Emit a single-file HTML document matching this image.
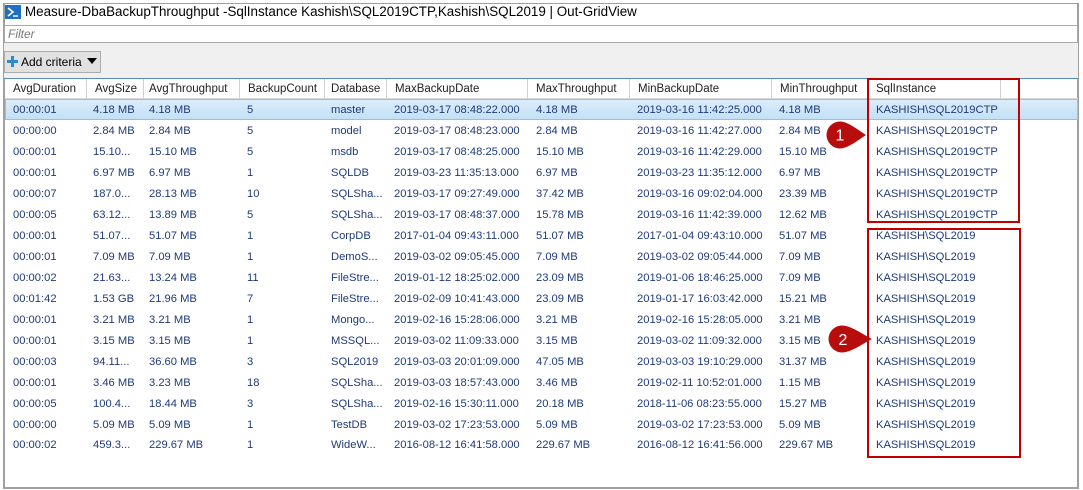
<!DOCTYPE html>
<html><head><meta charset="utf-8"><style>
*{margin:0;padding:0;box-sizing:border-box}
body{width:1083px;height:490px;background:#fff;position:relative;overflow:hidden;font-family:"Liberation Sans",sans-serif;font-size:11px}
.a{position:absolute;white-space:nowrap}
#frame{position:absolute;left:3px;top:3px;width:1076px;height:486px;border:2px solid #a0a0a0;border-top:1px solid #a0a0a0}
.row{position:absolute;left:5px;width:1073px;height:21px;color:#1f3a78;font-size:11.2px}
.row span{position:absolute;top:5px;white-space:nowrap}
.c1{left:8px}.c2{left:88px}.c3{left:144px}.c4{left:242px}.c5{left:326px}.c6{left:389px}.c7{left:531px}.c8{left:632px}.c9{left:774px}.c10{left:871px}
.hd{position:absolute;top:79px;height:20px;border-right:1px solid #d0d0d0;color:#222;padding:4px 0 0 8px;border-bottom:1px solid #d8d8d8;font-size:11.5px}
</style></head><body>
<div id="frame"></div>
<svg class="a" style="left:5px;top:5px" width="16" height="14"><rect width="16" height="14" fill="#1f6fc4"/><path d="M3 3 L8 7 L3 11" stroke="#fff" stroke-width="1.6" fill="none"/><path d="M8 11 H13" stroke="#fff" stroke-width="1.4"/></svg>
<div class="a" style="left:25px;top:4px;font-size:13.4px;color:#000">Measure-DbaBackupThroughput -SqlInstance Kashish\SQL2019CTP,Kashish\SQL2019 | Out-GridView</div>
<div class="a" style="left:4px;top:25px;width:1074px;height:18px;border:1px solid #a8a8a8;background:#fff"></div>
<div class="a" style="left:8px;top:27px;font-style:italic;color:#777;font-size:12px">Filter</div>
<div class="a" style="left:4px;top:43px;width:1074px;height:36px;background:#f0f0f0"></div>
<div class="a" style="left:4px;top:51px;width:97px;height:22px;border:1px solid #adadad;background:#e1e1e1"></div>
<svg class="a" style="left:7px;top:56px" width="11" height="11"><path d="M5.5 0V11M0 5.5H11" stroke="#2b8ad8" stroke-width="3"/></svg>
<div class="a" style="left:21px;top:55px;color:#000;font-size:12px">Add criteria</div>
<svg class="a" style="left:87px;top:58px" width="10" height="7"><path d="M0 0H10L5 6Z" fill="#000"/></svg>
<div class="a" style="left:4px;top:78px;width:1074px;height:1px;background:#5a8ab8"></div>
<div class="hd" style="left:5px;width:82px">AvgDuration</div>
<div class="hd" style="left:87px;width:57px">AvgSize</div>
<div class="hd" style="left:144px;width:96px;padding-left:5px">AvgThroughput</div>
<div class="hd" style="left:240px;width:85px">BackupCount</div>
<div class="hd" style="left:325px;width:62px;padding-left:6px">Database</div>
<div class="hd" style="left:387px;width:141px">MaxBackupDate</div>
<div class="hd" style="left:528px;width:102px">MaxThroughput</div>
<div class="hd" style="left:630px;width:142px">MinBackupDate</div>
<div class="hd" style="left:772px;width:96px">MinThroughput</div>
<div class="hd" style="left:868px;width:133px">SqlInstance</div>
<div class="hd" style="left:1001px;width:77px;border-right:none"></div>
<div class="a" style="left:5px;top:99px;width:1073px;height:21px;background:linear-gradient(#dcedfb,#c3e0f6);border:1px solid #8fc3ea"></div>
<div class="row" style="top:99px"><span class="c1">00:00:01</span><span class="c2">4.18 MB</span><span class="c3">4.18 MB</span><span class="c4">5</span><span class="c5">master</span><span class="c6">2019-03-17 08:48:22.000</span><span class="c7">4.18 MB</span><span class="c8">2019-03-16 11:42:25.000</span><span class="c9">4.18 MB</span><span class="c10">KASHISH\SQL2019CTP</span></div>
<div class="row" style="top:120px"><span class="c1">00:00:00</span><span class="c2">2.84 MB</span><span class="c3">2.84 MB</span><span class="c4">5</span><span class="c5">model</span><span class="c6">2019-03-17 08:48:23.000</span><span class="c7">2.84 MB</span><span class="c8">2019-03-16 11:42:27.000</span><span class="c9">2.84 MB</span><span class="c10">KASHISH\SQL2019CTP</span></div>
<div class="row" style="top:141px"><span class="c1">00:00:01</span><span class="c2">15.10...</span><span class="c3">15.10 MB</span><span class="c4">5</span><span class="c5">msdb</span><span class="c6">2019-03-17 08:48:25.000</span><span class="c7">15.10 MB</span><span class="c8">2019-03-16 11:42:29.000</span><span class="c9">15.10 MB</span><span class="c10">KASHISH\SQL2019CTP</span></div>
<div class="row" style="top:162px"><span class="c1">00:00:01</span><span class="c2">6.97 MB</span><span class="c3">6.97 MB</span><span class="c4">1</span><span class="c5">SQLDB</span><span class="c6">2019-03-23 11:35:13.000</span><span class="c7">6.97 MB</span><span class="c8">2019-03-23 11:35:12.000</span><span class="c9">6.97 MB</span><span class="c10">KASHISH\SQL2019CTP</span></div>
<div class="row" style="top:183px"><span class="c1">00:00:07</span><span class="c2">187.0...</span><span class="c3">28.13 MB</span><span class="c4">10</span><span class="c5">SQLSha...</span><span class="c6">2019-03-17 09:27:49.000</span><span class="c7">37.42 MB</span><span class="c8">2019-03-16 09:02:04.000</span><span class="c9">23.39 MB</span><span class="c10">KASHISH\SQL2019CTP</span></div>
<div class="row" style="top:204px"><span class="c1">00:00:05</span><span class="c2">63.12...</span><span class="c3">13.89 MB</span><span class="c4">5</span><span class="c5">SQLSha...</span><span class="c6">2019-03-17 08:48:37.000</span><span class="c7">15.78 MB</span><span class="c8">2019-03-16 11:42:39.000</span><span class="c9">12.62 MB</span><span class="c10">KASHISH\SQL2019CTP</span></div>
<div class="row" style="top:225px"><span class="c1">00:00:01</span><span class="c2">51.07...</span><span class="c3">51.07 MB</span><span class="c4">1</span><span class="c5">CorpDB</span><span class="c6">2017-01-04 09:43:11.000</span><span class="c7">51.07 MB</span><span class="c8">2017-01-04 09:43:10.000</span><span class="c9">51.07 MB</span><span class="c10">KASHISH\SQL2019</span></div>
<div class="row" style="top:246px"><span class="c1">00:00:01</span><span class="c2">7.09 MB</span><span class="c3">7.09 MB</span><span class="c4">1</span><span class="c5">DemoS...</span><span class="c6">2019-03-02 09:05:45.000</span><span class="c7">7.09 MB</span><span class="c8">2019-03-02 09:05:44.000</span><span class="c9">7.09 MB</span><span class="c10">KASHISH\SQL2019</span></div>
<div class="row" style="top:267px"><span class="c1">00:00:02</span><span class="c2">21.63...</span><span class="c3">13.24 MB</span><span class="c4">11</span><span class="c5">FileStre...</span><span class="c6">2019-01-12 18:25:02.000</span><span class="c7">23.09 MB</span><span class="c8">2019-01-06 18:46:25.000</span><span class="c9">7.09 MB</span><span class="c10">KASHISH\SQL2019</span></div>
<div class="row" style="top:288px"><span class="c1">00:01:42</span><span class="c2">1.53 GB</span><span class="c3">21.96 MB</span><span class="c4">7</span><span class="c5">FileStre...</span><span class="c6">2019-02-09 10:41:43.000</span><span class="c7">23.09 MB</span><span class="c8">2019-01-17 16:03:42.000</span><span class="c9">15.21 MB</span><span class="c10">KASHISH\SQL2019</span></div>
<div class="row" style="top:309px"><span class="c1">00:00:01</span><span class="c2">3.21 MB</span><span class="c3">3.21 MB</span><span class="c4">1</span><span class="c5">Mongo...</span><span class="c6">2019-02-16 15:28:06.000</span><span class="c7">3.21 MB</span><span class="c8">2019-02-16 15:28:05.000</span><span class="c9">3.21 MB</span><span class="c10">KASHISH\SQL2019</span></div>
<div class="row" style="top:330px"><span class="c1">00:00:01</span><span class="c2">3.15 MB</span><span class="c3">3.15 MB</span><span class="c4">1</span><span class="c5">MSSQL...</span><span class="c6">2019-03-02 11:09:33.000</span><span class="c7">3.15 MB</span><span class="c8">2019-03-02 11:09:32.000</span><span class="c9">3.15 MB</span><span class="c10">KASHISH\SQL2019</span></div>
<div class="row" style="top:351px"><span class="c1">00:00:03</span><span class="c2">94.11...</span><span class="c3">36.60 MB</span><span class="c4">3</span><span class="c5">SQL2019</span><span class="c6">2019-03-03 20:01:09.000</span><span class="c7">47.05 MB</span><span class="c8">2019-03-03 19:10:29.000</span><span class="c9">31.37 MB</span><span class="c10">KASHISH\SQL2019</span></div>
<div class="row" style="top:372px"><span class="c1">00:00:01</span><span class="c2">3.46 MB</span><span class="c3">3.23 MB</span><span class="c4">18</span><span class="c5">SQLSha...</span><span class="c6">2019-03-03 18:57:43.000</span><span class="c7">3.46 MB</span><span class="c8">2019-02-11 10:52:01.000</span><span class="c9">1.15 MB</span><span class="c10">KASHISH\SQL2019</span></div>
<div class="row" style="top:393px"><span class="c1">00:00:05</span><span class="c2">100.4...</span><span class="c3">18.44 MB</span><span class="c4">3</span><span class="c5">SQLSha...</span><span class="c6">2019-02-16 15:30:11.000</span><span class="c7">20.18 MB</span><span class="c8">2018-11-06 08:23:55.000</span><span class="c9">15.27 MB</span><span class="c10">KASHISH\SQL2019</span></div>
<div class="row" style="top:414px"><span class="c1">00:00:00</span><span class="c2">5.09 MB</span><span class="c3">5.09 MB</span><span class="c4">1</span><span class="c5">TestDB</span><span class="c6">2019-03-02 17:23:53.000</span><span class="c7">5.09 MB</span><span class="c8">2019-03-02 17:23:53.000</span><span class="c9">5.09 MB</span><span class="c10">KASHISH\SQL2019</span></div>
<div class="row" style="top:434px"><span class="c1">00:00:02</span><span class="c2">459.3...</span><span class="c3">229.67 MB</span><span class="c4">1</span><span class="c5">WideW...</span><span class="c6">2016-08-12 16:41:58.000</span><span class="c7">229.67 MB</span><span class="c8">2016-08-12 16:41:56.000</span><span class="c9">229.67 MB</span><span class="c10">KASHISH\SQL2019</span></div>
<div class="a" style="left:867px;top:78px;width:153px;height:145px;border:2px solid #c00000"></div>
<div class="a" style="left:867px;top:228px;width:154px;height:230px;border:2px solid #c00000"></div>
<svg class="a" style="left:824px;top:120px" width="46" height="30"><path d="M16 1.5 A13.5 13.5 0 1 0 16 28.5 C24 28.5 34 20 42 15 C34 10 24 1.5 16 1.5Z" fill="#b80d0d"/><text x="16" y="20.5" fill="#fff" font-size="16" font-family="Liberation Sans" text-anchor="middle">1</text></svg>
<svg class="a" style="left:826px;top:324px" width="50" height="30"><path d="M16 1.5 A13.5 13.5 0 1 0 16 28.5 C25 28.5 36 20 46 15 C36 10 25 1.5 16 1.5Z" fill="#b80d0d"/><text x="17" y="21" fill="#fff" font-size="16" font-family="Liberation Sans" text-anchor="middle">2</text></svg>
</body></html>
